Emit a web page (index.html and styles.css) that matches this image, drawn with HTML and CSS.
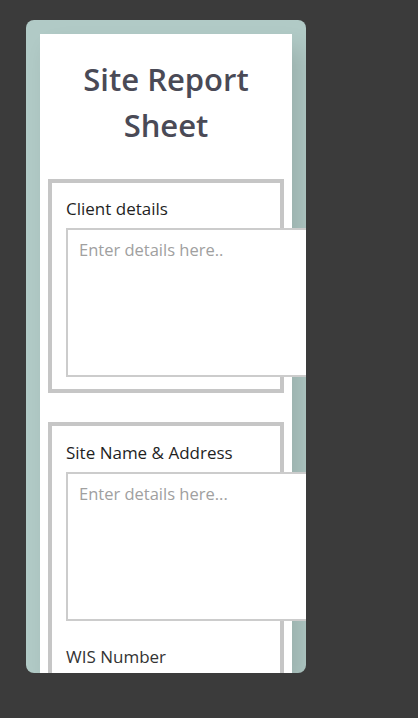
FILE: index.html
```html
<!DOCTYPE html>
<html lang="en">
<head>
<meta charset="utf-8">
<title>Site Report Sheet</title>
<link rel="stylesheet" href="styles.css">
</head>
<body>
<div class="card">
  <div class="sheet">
    <h1 class="title">Site Report Sheet</h1>
    <div class="group">
      <label class="label" for="client">Client details</label>
      <textarea class="input" id="client" placeholder="Enter details here.."></textarea>
    </div>
    <div class="group group-second">
      <label class="label" for="site">Site Name &amp; Address</label>
      <textarea class="input" id="site" placeholder="Enter details here..."></textarea>
      <label class="label label-next" for="wis">WIS Number</label>
    </div>
  </div>
</div>
</body>
</html>
```

FILE: styles.css
```css
html, body {
  margin: 0;
  height: 100%;
}

body {
  background: #3b3b3b;
  padding: 20px 0 0 26px;
  box-sizing: border-box;
  overflow: hidden;
  font-family: "Open Sans", "Liberation Sans", sans-serif;
}

.card {
  width: 280px;
  height: 653px;
  box-sizing: border-box;
  padding: 14px 14px 0;
  background: #b1cac6;
  border-radius: 8px;
  overflow: hidden;
}

.sheet {
  background: #ffffff;
  height: 100%;
  padding: 22px 8px 0;
  box-sizing: border-box;
  box-shadow: 10px 14px 22px rgba(0, 0, 0, 0.13);
}

.title {
  margin: 0;
  text-align: center;
  font-size: 31px;
  line-height: 46px;
  font-weight: 600;
  color: #4a4a56;
}

.group {
  margin-top: 31px;
  border: 4px solid #c6c6c6;
  padding: 14px 14px 12px;
}

.group-second {
  margin-top: 29px;
  padding-top: 15px;
}

.label {
  display: block;
  font-size: 17px;
  line-height: 24px;
  color: #1f1f1f;
  margin-bottom: 7px;
}

.label-next {
  margin-top: 24px;
  color: #333333;
}

.input {
  display: block;
  position: relative;
  width: 262px;
  height: 149px;
  box-sizing: border-box;
  border: 2px solid #cccccc;
  padding: 9px 11px;
  margin: 0;
  font-family: "Open Sans", "Liberation Sans", sans-serif;
  font-size: 16.5px;
  line-height: 22px;
  color: #333;
  background: #fff;
  resize: vertical;
  outline: none;
}

.input::placeholder {
  color: #a0a0a0;
}
```
